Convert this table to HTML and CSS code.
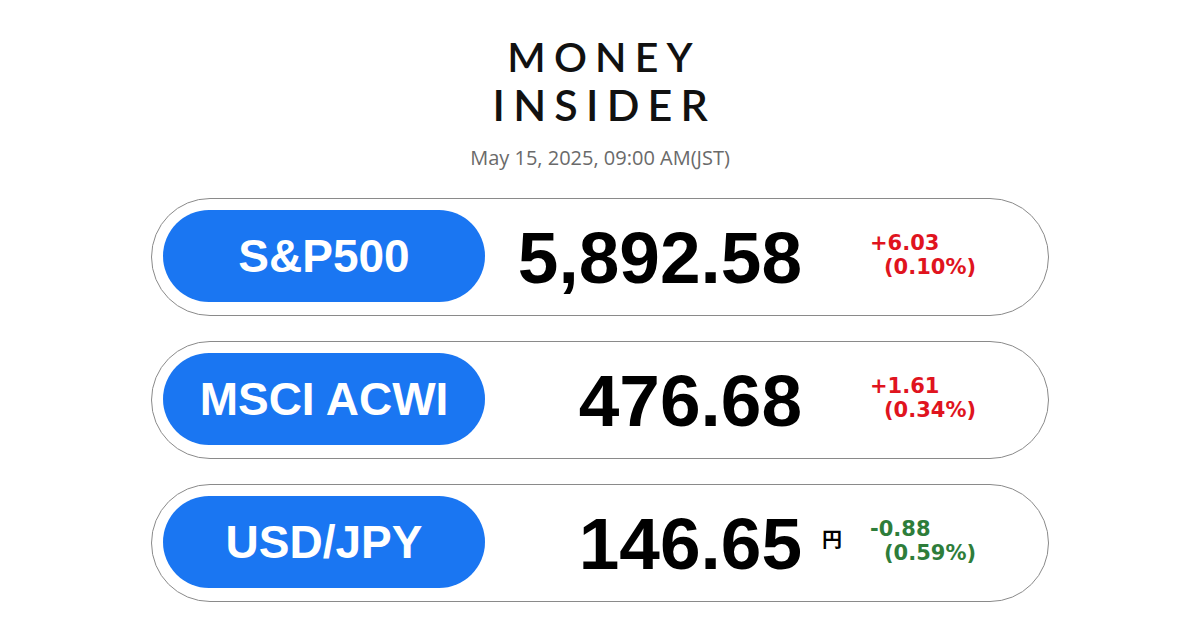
FILE: index.html
```html
<!DOCTYPE html>
<html lang="ja">
<head>
    <meta charset="UTF-8">
    <meta name="viewport" content="width=device-width, initial-scale=1.0">
    <title>Money Insider</title>
    <link rel="stylesheet" href="styles.css">
</head>
<body>

    <header class="masthead">
        <div class="logo">
            <span class="logo-line">MONEY</span>
            <span class="logo-line logo-line-big">INSIDER</span>
        </div>
        <p class="date">May 15, 2025, 09:00 AM(JST)</p>
    </header>

    <div class="rows">
        <div class="row">
            <div class="label">S&amp;P500</div>
            <div class="value">5,892.58</div>
            <div class="unit"></div>
            <div class="change up">
                <span>+6.03</span>
                <span class="pct">(0.10%)</span>
            </div>
        </div>

        <div class="row">
            <div class="label">MSCI ACWI</div>
            <div class="value">476.68</div>
            <div class="unit"></div>
            <div class="change up">
                <span>+1.61</span>
                <span class="pct">(0.34%)</span>
            </div>
        </div>

        <div class="row">
            <div class="label">USD/JPY</div>
            <div class="value">146.65</div>
            <div class="unit">円</div>
            <div class="change down">
                <span>-0.88</span>
                <span class="pct">(0.59%)</span>
            </div>
        </div>
    </div>

</body>
</html>
```

FILE: styles.css
```css
body {
    margin: 0;
    background-color: #fff;
    color: #000;
    font-family: 'Liberation Sans', Arial, sans-serif;
}

.masthead {
    padding-top: 33px;
    text-align: center;
}

.logo {
    display: flex;
    flex-direction: column;
    align-items: center;
    font-family: 'Lato', sans-serif;
    font-weight: 600;
    font-size: 41px;
    line-height: 48px;
    letter-spacing: 0.2em;
    color: #111;
}

.logo-line {
    margin-right: -0.2em;
}

.logo-line-big {
    font-size: 43px;
}

.date {
    margin: 16px 0 0;
    font-family: 'Open Sans', sans-serif;
    font-size: 20px;
    line-height: 26px;
    color: #6a6a6a;
}

.rows {
    width: 898px;
    margin: 27px auto 0;
    display: flex;
    flex-direction: column;
    gap: 25px;
}

.row {
    box-sizing: border-box;
    height: 118px;
    border: 1px solid #8a8a8a;
    border-radius: 59px;
    padding: 0 11px;
    display: flex;
    align-items: center;
}

.label {
    width: 322px;
    height: 92px;
    border-radius: 46px;
    background-color: #1a76f2;
    color: #fff;
    font-weight: bold;
    font-size: 46px;
    display: flex;
    align-items: center;
    justify-content: center;
    margin-top: -2px;
}

.value {
    width: 317px;
    text-align: right;
    font-weight: bold;
    font-size: 73px;
    line-height: 1;
}

.unit {
    width: 68px;
    box-sizing: border-box;
    padding-left: 20px;
    padding-bottom: 10px;
    font-family: 'Noto Sans CJK JP', sans-serif;
    font-weight: bold;
    font-size: 20px;
}

.change {
    display: flex;
    flex-direction: column;
    font-family: 'DejaVu Sans', sans-serif;
    font-weight: bold;
    font-size: 21px;
    line-height: 24px;
    margin-top: -4px;
}

.change .pct {
    padding-left: 14px;
}

.change.up {
    color: #e0141e;
}

.change.down {
    color: #2e7d3a;
}
```
